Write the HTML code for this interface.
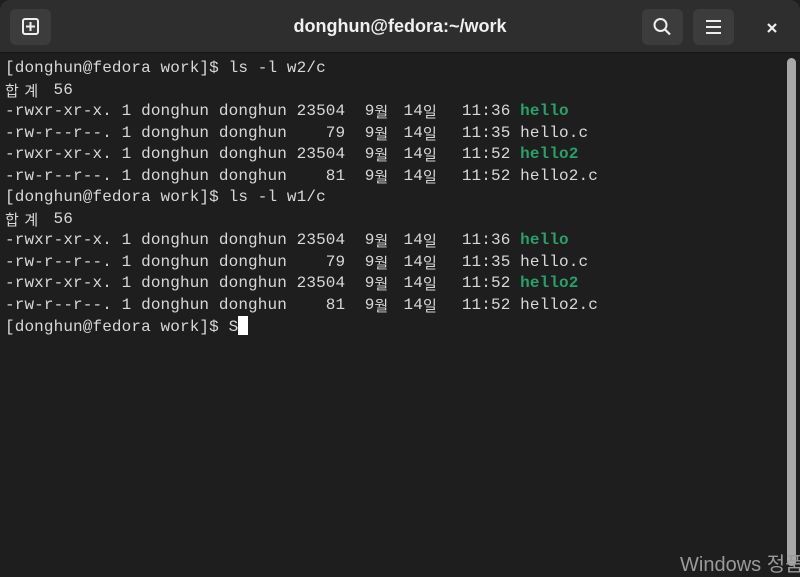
<!DOCTYPE html>
<html><head><meta charset="utf-8"><style>
html,body{margin:0;padding:0;width:800px;height:573px;overflow:hidden;background:#1e1e1e;}
.title{position:absolute;left:0;top:0;width:800px;height:52px;background:#2e2e2e;border-bottom:1px solid #151515;border-radius:10px 10px 0 0;}
.btn{position:absolute;top:9px;width:41px;height:36px;background:#3c3c3c;border-radius:6px;}
.t{position:absolute;left:0;right:0;top:16px;text-align:center;color:#f0f0f0;font:bold 18px "Liberation Sans",sans-serif;}
.term{position:absolute;left:5px;top:58px;font:16px/21.5px "Liberation Mono",monospace;letter-spacing:0.12px;color:#d8d8d8;white-space:pre;}
.k{display:inline-block;width:19.4px;height:16px;line-height:16px;text-align:left;font-family:"Noto Sans CJK KR",sans-serif;font-size:15px;vertical-align:-2px;overflow:visible;}
.g{color:#26a269;font-weight:bold;}
.cur{display:inline-block;width:9.6px;height:19px;background:#fff;vertical-align:-4px;}
.sb{position:absolute;left:787px;top:58px;width:9px;height:508px;background:#a8a8a8;border-radius:5px;}
.wm{position:absolute;left:680px;top:548px;color:#9a9a9a;font:20px "Liberation Sans","Noto Sans CJK KR",sans-serif;white-space:nowrap;}
</style></head><body>
<div class="title">
<div class="btn" style="left:10px"><svg width="41" height="36"><rect x="13" y="10" width="15" height="15" rx="2" fill="none" stroke="#eee" stroke-width="2"/><path d="M20.5 13v9M16 17.5h9" stroke="#eee" stroke-width="2"/></svg></div>
<div class="t">donghun@fedora:~/work</div>
<div class="btn" style="left:642px"><svg width="41" height="36"><circle cx="18.5" cy="16" r="6" fill="none" stroke="#eee" stroke-width="2"/><path d="M23 20.5l5 5" stroke="#eee" stroke-width="2.2"/></svg></div>
<div class="btn" style="left:693px"><svg width="41" height="36"><path d="M13 12h15M13 18h15M13 24h15" stroke="#eee" stroke-width="2"/></svg></div>
<svg style="position:absolute;left:766px;top:22px" width="12" height="12"><path d="M2 2l8 8M10 2l-8 8" stroke="#eee" stroke-width="2.2"/></svg>
</div>
<div class="term">[donghun@fedora work]$ ls -l w2/c
<span class="k">합</span><span class="k">계</span> 56
-rwxr-xr-x. 1 donghun donghun 23504  9<span class="k">월</span> 14<span class="k">일</span>  11:36 <span class="g">hello</span>
-rw-r--r--. 1 donghun donghun    79  9<span class="k">월</span> 14<span class="k">일</span>  11:35 hello.c
-rwxr-xr-x. 1 donghun donghun 23504  9<span class="k">월</span> 14<span class="k">일</span>  11:52 <span class="g">hello2</span>
-rw-r--r--. 1 donghun donghun    81  9<span class="k">월</span> 14<span class="k">일</span>  11:52 hello2.c
[donghun@fedora work]$ ls -l w1/c
<span class="k">합</span><span class="k">계</span> 56
-rwxr-xr-x. 1 donghun donghun 23504  9<span class="k">월</span> 14<span class="k">일</span>  11:36 <span class="g">hello</span>
-rw-r--r--. 1 donghun donghun    79  9<span class="k">월</span> 14<span class="k">일</span>  11:35 hello.c
-rwxr-xr-x. 1 donghun donghun 23504  9<span class="k">월</span> 14<span class="k">일</span>  11:52 <span class="g">hello2</span>
-rw-r--r--. 1 donghun donghun    81  9<span class="k">월</span> 14<span class="k">일</span>  11:52 hello2.c
[donghun@fedora work]$ S<span class="cur"></span></div>
<div class="sb"></div>
<div class="wm">Windows 정품</div>
</body></html>
